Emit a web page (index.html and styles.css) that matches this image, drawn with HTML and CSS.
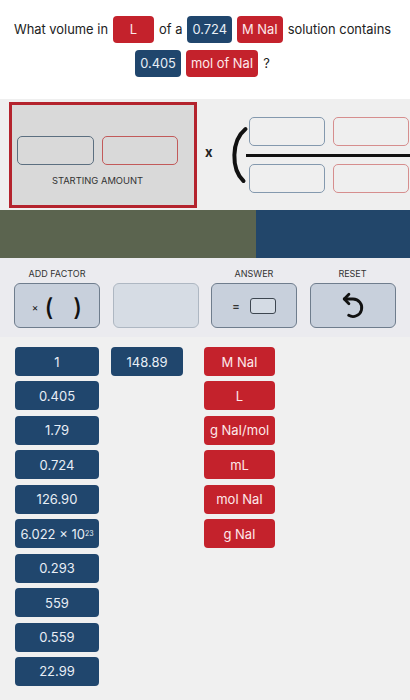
FILE: index.html
```html
<!DOCTYPE html>
<html>
<head>
<meta charset="utf-8">
<link rel="stylesheet" href="styles.css">
</head>
<body>
<div class="q">
  <div class="qrow"><span>What volume in</span><span class="chip red wide">L</span><span>of a</span><span class="chip blue">0.724</span><span class="chip red">M NaI</span><span>solution contains</span></div>
  <div class="qrow"><span class="chip blue">0.405</span><span class="chip red">mol of NaI</span><span>?</span></div>
</div>
<div class="work">
  <div class="start">
    <div class="sinner">
      <div class="slots"><div class="slot b"></div><div class="slot r"></div></div>
      <div class="slabel">STARTING AMOUNT</div>
    </div>
  </div>
  <div class="times">x</div>
  <svg class="paren" width="13" height="56" viewBox="0 0 13 56"><path d="M12.5 2 C -2 14, -2 42, 10.5 54" fill="none" stroke="#111" stroke-width="4" stroke-linecap="round"/></svg>
  <div class="frac">
    <div class="frow"><div class="slot fb"></div><div class="slot fr"></div></div>
    <div class="fline"></div>
    <div class="frow"><div class="slot fb"></div><div class="slot fr"></div></div>
  </div>
</div>
<div class="bar"><div class="g"></div><div class="bl"></div></div>
<div class="controls">
  <div class="ctl"><div class="clabel">ADD FACTOR</div><div class="btn"><span class="tx">×</span><span class="pl">(</span><span class="pr">)</span></div></div>
  <div class="ctl"><div class="clabel"></div><div class="btn dis"></div></div>
  <div class="ctl"><div class="clabel">ANSWER</div><div class="btn"><span class="eq">=</span><span class="abox"></span></div></div>
  <div class="ctl"><div class="clabel">RESET</div><div class="btn"><svg class="reset" width="26" height="28" viewBox="0 0 22 24"><path d="M3.5 6 H11 A7.5 7.5 0 1 1 7.25 20" fill="none" stroke="#111" stroke-width="2.4" stroke-linecap="round"/><path d="M7.5 2 L3.5 6 L7.5 10" fill="none" stroke="#111" stroke-width="2.4" stroke-linecap="round" stroke-linejoin="round"/></svg></div></div>
</div>
<div class="tiles">
  <div class="col c1">
    <div class="tile b">1</div>
    <div class="tile b">0.405</div>
    <div class="tile b">1.79</div>
    <div class="tile b">0.724</div>
    <div class="tile b">126.90</div>
    <div class="tile b">6.022 × 10<sup>23</sup></div>
    <div class="tile b">0.293</div>
    <div class="tile b">559</div>
    <div class="tile b">0.559</div>
    <div class="tile b">22.99</div>
  </div>
  <div class="col c2">
    <div class="tile b">148.89</div>
  </div>
  <div class="col c3">
    <div class="tile r">M NaI</div>
    <div class="tile r">L</div>
    <div class="tile r">g NaI/mol</div>
    <div class="tile r">mL</div>
    <div class="tile r">mol NaI</div>
    <div class="tile r">g NaI</div>
  </div>
</div>
</body>
</html>
```
FILE: styles.css
```css
body {
  margin: 0;
  width: 410px;
  height: 700px;
  overflow: hidden;
  background: #f0f0f0;
  font-family: Inter, "Noto Sans", sans-serif;
}
.q {
  background: #fff;
  height: 99px;
  box-sizing: border-box;
  padding: 16px 5px 0 0;
  display: flex;
  flex-direction: column;
  align-items: center;
  gap: 7px;
}
.qrow {
  display: flex;
  align-items: center;
  gap: 5px;
  height: 27px;
  font-size: 12.9px;
  color: #222;
}
.chip {
  height: 27px;
  line-height: 27px;
  padding: 0 5px;
  border-radius: 4px;
  box-sizing: border-box;
  color: #fff;
}
.chip.red { background: #c4222c; color: #fde8ea; }
.chip.blue { background: #20466d; color: #e8eef5; }
.chip.wide { min-width: 41px; text-align: center; }

.work {
  height: 111px;
  background: #efefef;
  display: flex;
  align-items: center;
}
.start {
  align-self: flex-start;
  margin: 3px 0 0 9px;
  width: 188px;
  height: 106px;
  box-sizing: border-box;
  border: 3px solid #b4232d;
  background: #d9d9d9;
  padding: 31px 0 0 5px;
}
.sinner { width: 161px; }
.slots { display: flex; gap: 8px; }
.slot {
  width: 77px;
  height: 29px;
  box-sizing: border-box;
  border-radius: 5px;
  border: 1.5px solid #5c6f80;
}
.slots .slot.r { border-color: #c25a5a; width: 76px; }
.slabel {
  margin-top: 10px;
  text-align: center;
  font-size: 9.4px;
  line-height: 12px;
  color: #333;
}
.times {
  margin-left: 8px;
  margin-bottom: 5px;
  font-weight: 700;
  font-size: 13px;
  color: #222;
}
.paren { margin-left: 20px; overflow: visible; }
.frac {
  flex: 1;
  display: flex;
  flex-direction: column;
}
.frow { display: flex; gap: 8px; padding-left: 3px; }
.slot.fb { width: 76px; border: 1.2px solid #8499ae; }
.slot.fr { width: 76px; border: 1.2px solid #d68e8e; }
.fline { height: 3px; background: #111; margin: 8px 0 7px; }

.bar { display: flex; height: 48px; }
.bar .g { width: 256px; background: #5b644f; }
.bar .bl { flex: 1; background: #22466a; }

.controls {
  height: 79px;
  box-sizing: border-box;
  background: #ebebef;
  display: flex;
  gap: 12.5px;
  padding: 10px 0 0 14px;
}
.ctl {
  width: 86px;
  display: flex;
  flex-direction: column;
  align-items: center;
}
.clabel {
  height: 12px;
  line-height: 12px;
  font-size: 9px;
  color: #333;
  margin-bottom: 3px;
}
.btn {
  width: 86px;
  height: 45px;
  box-sizing: border-box;
  border: 1px solid #6f7d8d;
  border-radius: 6px;
  background: #c8d0dc;
  display: flex;
  align-items: center;
  justify-content: center;
  color: #111;
}
.btn.dis { background: #d6dce4; border-color: #aeb7c2; }
.tx { font-size: 10px; margin-right: 6px; margin-top: 2px; }
.pl, .pr { font-size: 24px; font-weight: 500; line-height: 24px; margin-top: 4px; }
.pr { margin-left: 20px; }
.eq { font-size: 11px; font-weight: 700; margin-right: 10px; color: #333; }
.abox {
  width: 26px;
  height: 16px;
  box-sizing: border-box;
  border: 1.5px solid #3d4650;
  border-radius: 3px;
  background: #d4dbe4;
}
.reset { margin-top: 1px; }

.tiles {
  display: flex;
  align-items: flex-start;
  padding-top: 10px;
}
.col { display: flex; flex-direction: column; gap: 5.44px; }
.c1 { margin-left: 15px; width: 84px; }
.c2 { margin-left: 12px; width: 72px; }
.c3 { margin-left: 21px; width: 71px; }
.tile {
  height: 29px;
  border-radius: 4px;
  display: flex;
  align-items: center;
  justify-content: center;
  font-size: 13px;
}
.tile.b { background: #20466d; color: #e8eef5; }
.tile.r { background: #c4222c; color: #fde8ea; }
.tile sup { font-size: 7px; line-height: 0; vertical-align: 5px; }
```
